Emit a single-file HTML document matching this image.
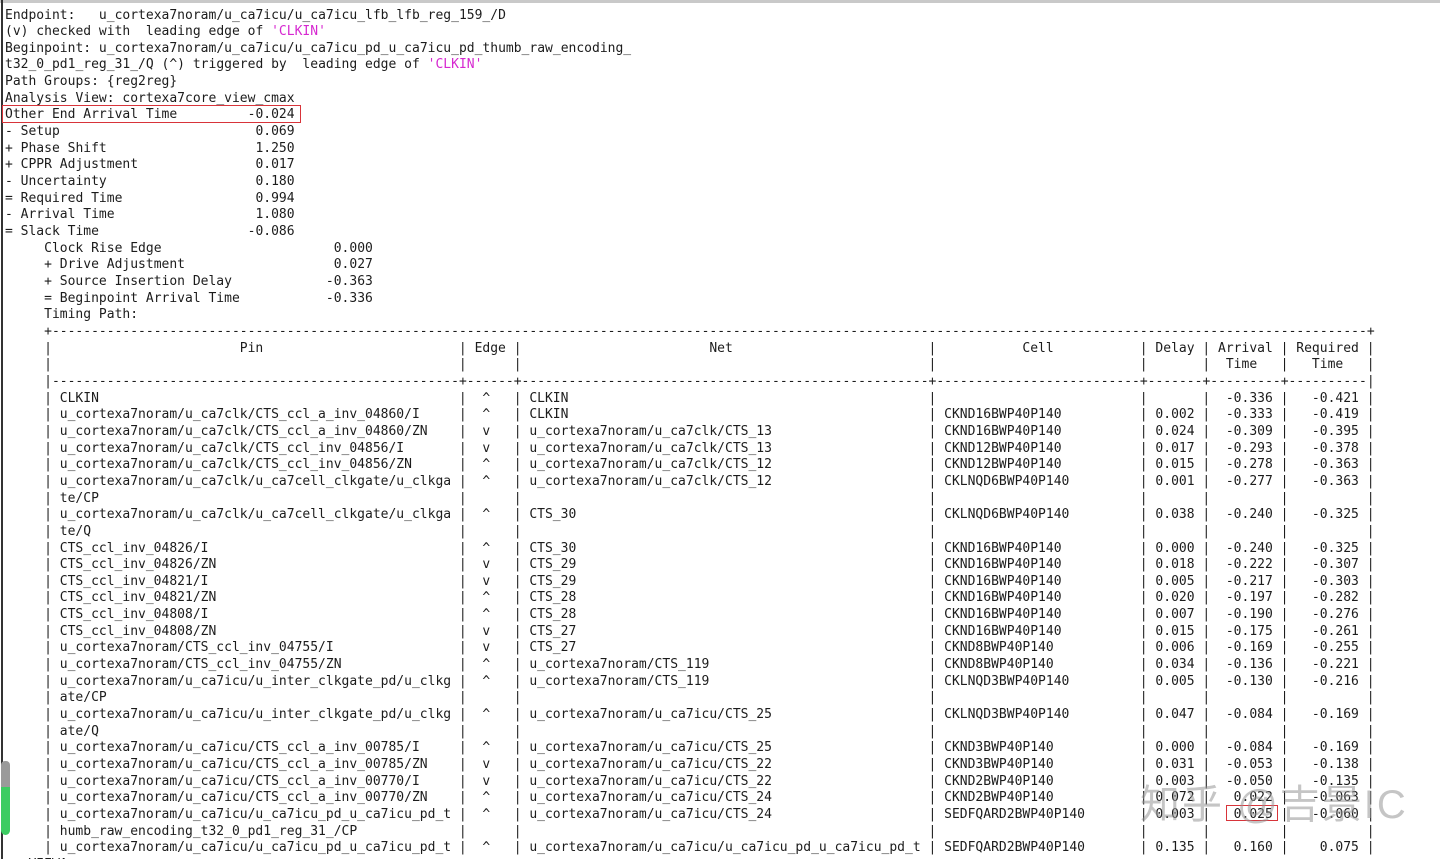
<!DOCTYPE html>
<html><head><meta charset="utf-8"><style>
html,body{margin:0;padding:0;background:#fff;width:1440px;height:859px;overflow:hidden;position:relative}
#t{position:absolute;left:5px;top:7.5px;font-family:"DejaVu Sans Mono","Liberation Mono",monospace;font-size:13px;line-height:16.667px;color:#1c1c1c;white-space:pre}
#t div{height:16.667px}
.m{color:#d628d0}
.ind{padding-left:5ch}
.r{padding-left:5ch}
.r i{font-style:normal;display:inline-block;overflow:hidden;vertical-align:top;white-space:pre}
.a{width:51ch;padding-left:1ch}
.b{width:4ch;padding-left:2ch}
.b.h{width:5ch;padding-left:1ch}
.c{width:51ch;padding-left:1ch}
.d{width:25ch;padding-left:1ch}
.e{width:6ch;padding-right:1ch;text-align:right}
.f{width:8ch;padding-right:1ch;text-align:right}
.g{width:9ch;padding-right:1ch;text-align:right}
.dl .a,.dl .c{width:52ch;padding:0}.dl .b{width:6ch;padding:0}.dl .d{width:26ch;padding:0}.dl .e{width:7ch;padding:0}.dl .f{width:9ch;padding:0}.dl .g{width:10ch;padding:0}
.top{display:inline-block;width:168ch;overflow:hidden;vertical-align:top}
.box{position:absolute;border:1.5px solid #d8343a}
#frame{position:absolute;left:1px;top:0;width:2px;height:859px;background:#333}
#topbar{position:absolute;left:0;top:0;width:1440px;height:3px;background:#c9c9c9}
#sb1{position:absolute;left:1px;top:761px;width:9px;height:30px;background:#9a9a9a;border-radius:4px 4px 0 0}
#sb2{position:absolute;left:1px;top:787px;width:9px;height:48px;background:#3ccc62;border-radius:0 0 5px 5px}
#wm{position:absolute;left:1140px;top:772px;font-family:"Liberation Sans","Noto Sans CJK SC",sans-serif;font-size:40px;color:rgba(150,150,150,0.55);letter-spacing:2px}
</style></head><body>
<div id="topbar"></div><div id="frame"></div>
<div id="t"><div>Endpoint:   u_cortexa7noram/u_ca7icu/u_ca7icu_lfb_lfb_reg_159_/D</div><div>(v) checked with  leading edge of <span class="m">'CLKIN'</span></div><div>Beginpoint: u_cortexa7noram/u_ca7icu/u_ca7icu_pd_u_ca7icu_pd_thumb_raw_encoding_</div><div>t32_0_pd1_reg_31_/Q (^) triggered by  leading edge of <span class="m">'CLKIN'</span></div><div>Path Groups: {reg2reg}</div><div>Analysis View: cortexa7core_view_cmax</div><div>Other End Arrival Time         -0.024</div><div>- Setup                         0.069</div><div>+ Phase Shift                   1.250</div><div>+ CPPR Adjustment               0.017</div><div>- Uncertainty                   0.180</div><div>= Required Time                 0.994</div><div>- Arrival Time                  1.080</div><div>= Slack Time                   -0.086</div><div class="ind">Clock Rise Edge                      0.000</div><div class="ind">+ Drive Adjustment                   0.027</div><div class="ind">+ Source Insertion Delay            -0.363</div><div class="ind">= Beginpoint Arrival Time           -0.336</div><div class="ind">Timing Path:</div><div class="r">+<span class="top">------------------------------------------------------------------------------------------------------------------------------------------------------------------------------------------------</span>+</div><div class="r">|<i class="a">                       Pin</i>|<i class="b h">Edge</i>|<i class="c">                       Net</i>|<i class="d">          Cell</i>|<i class="e">Delay</i>|<i class="f">Arrival</i>|<i class="g">Required</i>|</div><div class="r">|<i class="a"></i>|<i class="b"></i>|<i class="c"></i>|<i class="d"></i>|<i class="e"></i>|<i class="f">Time  </i>|<i class="g">Time  </i>|</div><div class="r dl">|<i class="a">------------------------------------------------------------</i>+<i class="b">----------</i>+<i class="c">------------------------------------------------------------</i>+<i class="d">--------------------------------</i>+<i class="e">----------</i>+<i class="f">------------</i>+<i class="g">------------</i>|</div><div class="r">|<i class="a">CLKIN</i>|<i class="b">^</i>|<i class="c">CLKIN</i>|<i class="d"></i>|<i class="e"></i>|<i class="f">-0.336</i>|<i class="g">-0.421</i>|</div><div class="r">|<i class="a">u_cortexa7noram/u_ca7clk/CTS_ccl_a_inv_04860/I</i>|<i class="b">^</i>|<i class="c">CLKIN</i>|<i class="d">CKND16BWP40P140</i>|<i class="e">0.002</i>|<i class="f">-0.333</i>|<i class="g">-0.419</i>|</div><div class="r">|<i class="a">u_cortexa7noram/u_ca7clk/CTS_ccl_a_inv_04860/ZN</i>|<i class="b">v</i>|<i class="c">u_cortexa7noram/u_ca7clk/CTS_13</i>|<i class="d">CKND16BWP40P140</i>|<i class="e">0.024</i>|<i class="f">-0.309</i>|<i class="g">-0.395</i>|</div><div class="r">|<i class="a">u_cortexa7noram/u_ca7clk/CTS_ccl_inv_04856/I</i>|<i class="b">v</i>|<i class="c">u_cortexa7noram/u_ca7clk/CTS_13</i>|<i class="d">CKND12BWP40P140</i>|<i class="e">0.017</i>|<i class="f">-0.293</i>|<i class="g">-0.378</i>|</div><div class="r">|<i class="a">u_cortexa7noram/u_ca7clk/CTS_ccl_inv_04856/ZN</i>|<i class="b">^</i>|<i class="c">u_cortexa7noram/u_ca7clk/CTS_12</i>|<i class="d">CKND12BWP40P140</i>|<i class="e">0.015</i>|<i class="f">-0.278</i>|<i class="g">-0.363</i>|</div><div class="r">|<i class="a">u_cortexa7noram/u_ca7clk/u_ca7cell_clkgate/u_clkga</i>|<i class="b">^</i>|<i class="c">u_cortexa7noram/u_ca7clk/CTS_12</i>|<i class="d">CKLNQD6BWP40P140</i>|<i class="e">0.001</i>|<i class="f">-0.277</i>|<i class="g">-0.363</i>|</div><div class="r">|<i class="a">te/CP</i>|<i class="b"></i>|<i class="c"></i>|<i class="d"></i>|<i class="e"></i>|<i class="f"></i>|<i class="g"></i>|</div><div class="r">|<i class="a">u_cortexa7noram/u_ca7clk/u_ca7cell_clkgate/u_clkga</i>|<i class="b">^</i>|<i class="c">CTS_30</i>|<i class="d">CKLNQD6BWP40P140</i>|<i class="e">0.038</i>|<i class="f">-0.240</i>|<i class="g">-0.325</i>|</div><div class="r">|<i class="a">te/Q</i>|<i class="b"></i>|<i class="c"></i>|<i class="d"></i>|<i class="e"></i>|<i class="f"></i>|<i class="g"></i>|</div><div class="r">|<i class="a">CTS_ccl_inv_04826/I</i>|<i class="b">^</i>|<i class="c">CTS_30</i>|<i class="d">CKND16BWP40P140</i>|<i class="e">0.000</i>|<i class="f">-0.240</i>|<i class="g">-0.325</i>|</div><div class="r">|<i class="a">CTS_ccl_inv_04826/ZN</i>|<i class="b">v</i>|<i class="c">CTS_29</i>|<i class="d">CKND16BWP40P140</i>|<i class="e">0.018</i>|<i class="f">-0.222</i>|<i class="g">-0.307</i>|</div><div class="r">|<i class="a">CTS_ccl_inv_04821/I</i>|<i class="b">v</i>|<i class="c">CTS_29</i>|<i class="d">CKND16BWP40P140</i>|<i class="e">0.005</i>|<i class="f">-0.217</i>|<i class="g">-0.303</i>|</div><div class="r">|<i class="a">CTS_ccl_inv_04821/ZN</i>|<i class="b">^</i>|<i class="c">CTS_28</i>|<i class="d">CKND16BWP40P140</i>|<i class="e">0.020</i>|<i class="f">-0.197</i>|<i class="g">-0.282</i>|</div><div class="r">|<i class="a">CTS_ccl_inv_04808/I</i>|<i class="b">^</i>|<i class="c">CTS_28</i>|<i class="d">CKND16BWP40P140</i>|<i class="e">0.007</i>|<i class="f">-0.190</i>|<i class="g">-0.276</i>|</div><div class="r">|<i class="a">CTS_ccl_inv_04808/ZN</i>|<i class="b">v</i>|<i class="c">CTS_27</i>|<i class="d">CKND16BWP40P140</i>|<i class="e">0.015</i>|<i class="f">-0.175</i>|<i class="g">-0.261</i>|</div><div class="r">|<i class="a">u_cortexa7noram/CTS_ccl_inv_04755/I</i>|<i class="b">v</i>|<i class="c">CTS_27</i>|<i class="d">CKND8BWP40P140</i>|<i class="e">0.006</i>|<i class="f">-0.169</i>|<i class="g">-0.255</i>|</div><div class="r">|<i class="a">u_cortexa7noram/CTS_ccl_inv_04755/ZN</i>|<i class="b">^</i>|<i class="c">u_cortexa7noram/CTS_119</i>|<i class="d">CKND8BWP40P140</i>|<i class="e">0.034</i>|<i class="f">-0.136</i>|<i class="g">-0.221</i>|</div><div class="r">|<i class="a">u_cortexa7noram/u_ca7icu/u_inter_clkgate_pd/u_clkg</i>|<i class="b">^</i>|<i class="c">u_cortexa7noram/CTS_119</i>|<i class="d">CKLNQD3BWP40P140</i>|<i class="e">0.005</i>|<i class="f">-0.130</i>|<i class="g">-0.216</i>|</div><div class="r">|<i class="a">ate/CP</i>|<i class="b"></i>|<i class="c"></i>|<i class="d"></i>|<i class="e"></i>|<i class="f"></i>|<i class="g"></i>|</div><div class="r">|<i class="a">u_cortexa7noram/u_ca7icu/u_inter_clkgate_pd/u_clkg</i>|<i class="b">^</i>|<i class="c">u_cortexa7noram/u_ca7icu/CTS_25</i>|<i class="d">CKLNQD3BWP40P140</i>|<i class="e">0.047</i>|<i class="f">-0.084</i>|<i class="g">-0.169</i>|</div><div class="r">|<i class="a">ate/Q</i>|<i class="b"></i>|<i class="c"></i>|<i class="d"></i>|<i class="e"></i>|<i class="f"></i>|<i class="g"></i>|</div><div class="r">|<i class="a">u_cortexa7noram/u_ca7icu/CTS_ccl_a_inv_00785/I</i>|<i class="b">^</i>|<i class="c">u_cortexa7noram/u_ca7icu/CTS_25</i>|<i class="d">CKND3BWP40P140</i>|<i class="e">0.000</i>|<i class="f">-0.084</i>|<i class="g">-0.169</i>|</div><div class="r">|<i class="a">u_cortexa7noram/u_ca7icu/CTS_ccl_a_inv_00785/ZN</i>|<i class="b">v</i>|<i class="c">u_cortexa7noram/u_ca7icu/CTS_22</i>|<i class="d">CKND3BWP40P140</i>|<i class="e">0.031</i>|<i class="f">-0.053</i>|<i class="g">-0.138</i>|</div><div class="r">|<i class="a">u_cortexa7noram/u_ca7icu/CTS_ccl_a_inv_00770/I</i>|<i class="b">v</i>|<i class="c">u_cortexa7noram/u_ca7icu/CTS_22</i>|<i class="d">CKND2BWP40P140</i>|<i class="e">0.003</i>|<i class="f">-0.050</i>|<i class="g">-0.135</i>|</div><div class="r">|<i class="a">u_cortexa7noram/u_ca7icu/CTS_ccl_a_inv_00770/ZN</i>|<i class="b">^</i>|<i class="c">u_cortexa7noram/u_ca7icu/CTS_24</i>|<i class="d">CKND2BWP40P140</i>|<i class="e">0.072</i>|<i class="f">0.022</i>|<i class="g">-0.063</i>|</div><div class="r">|<i class="a">u_cortexa7noram/u_ca7icu/u_ca7icu_pd_u_ca7icu_pd_t</i>|<i class="b">^</i>|<i class="c">u_cortexa7noram/u_ca7icu/CTS_24</i>|<i class="d">SEDFQARD2BWP40P140</i>|<i class="e">0.003</i>|<i class="f">0.025</i>|<i class="g">-0.060</i>|</div><div class="r">|<i class="a">humb_raw_encoding_t32_0_pd1_reg_31_/CP</i>|<i class="b"></i>|<i class="c"></i>|<i class="d"></i>|<i class="e"></i>|<i class="f"></i>|<i class="g"></i>|</div><div class="r">|<i class="a">u_cortexa7noram/u_ca7icu/u_ca7icu_pd_u_ca7icu_pd_t</i>|<i class="b">^</i>|<i class="c">u_cortexa7noram/u_ca7icu/u_ca7icu_pd_u_ca7icu_pd_t</i>|<i class="d">SEDFQARD2BWP40P140</i>|<i class="e">0.135</i>|<i class="f">0.160</i>|<i class="g">0.075</i>|</div><div>   VIEWA</div></div>
<div class="box" style="left:2px;top:105px;width:297px;height:16px"></div>
<div class="box" style="left:1226px;top:805px;width:50px;height:14px"></div>
<div id="sb1"></div><div id="sb2"></div>
<div id="wm">知乎 @吉景IC</div>
</body></html>
